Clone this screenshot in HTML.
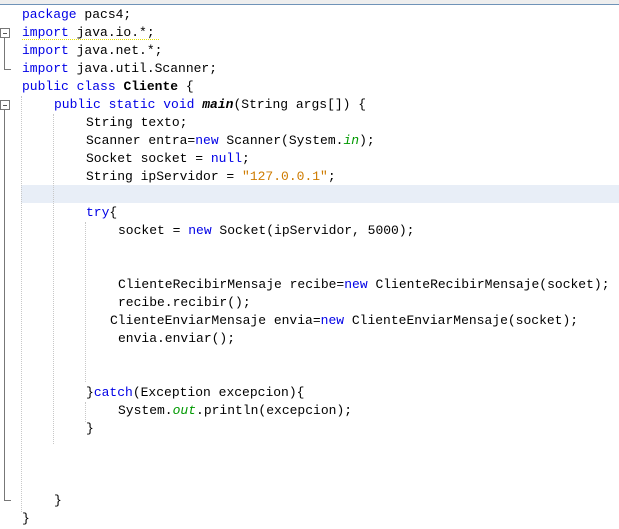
<!DOCTYPE html>
<html><head><meta charset="utf-8"><style>
html,body{margin:0;padding:0;background:#fff;width:619px;height:529px;overflow:hidden;position:relative}
.top{position:absolute;left:0;top:0;width:619px;height:4px;background:#eeeeee;border-bottom:1px solid #6f93b8}
.l{position:absolute;white-space:pre;font-family:"Liberation Mono",monospace;font-size:13px;line-height:18px;color:#000;height:18px}
.k{color:#0000e6}.s{color:#ce7b00}.g{color:#009900;font-style:italic}.b{font-weight:bold}
.hl{position:absolute;left:21px;top:185px;width:598px;height:18px;background:#e8eef7}
.v{position:absolute;width:0;border-left:1px dotted #c8c8c8}
.fold{position:absolute;border-left:1px solid #777}
.box{position:absolute;width:8px;height:8px;border:1px solid #777;background:#fff}
.box:after{content:"";position:absolute;left:2px;top:4px;width:4px;height:1px;background:#555}
</style></head><body>
<div class="top"></div>
<div class="hl"></div>
<div class="v" style="left:21px;top:96px;height:416px"></div>
<div class="v" style="left:53px;top:114px;height:330px"></div>
<div class="v" style="left:85px;top:222px;height:160px"></div>
<div class="v" style="left:85px;top:402px;height:20px"></div>
<div class="fold" style="left:4px;top:38px;height:31px;border-bottom:1px solid #777;width:6px"></div>
<div class="box" style="left:0px;top:28px"></div>
<div class="fold" style="left:4px;top:110px;height:390px;border-bottom:1px solid #777;width:6px"></div>
<div class="box" style="left:0px;top:100px"></div>
<div class="l" style="left:22px;top:6px"><span class="k">package</span> pacs4;</div>
<div class="l" style="left:22px;top:24px"><span class="k">import</span> java.io.*;</div>
<div style="position:absolute;left:22px;top:39px;width:137px;border-bottom:1px dotted #e8e000"></div>
<div class="l" style="left:22px;top:42px"><span class="k">import</span> java.net.*;</div>
<div class="l" style="left:22px;top:60px"><span class="k">import</span> java.util.Scanner;</div>
<div class="l" style="left:22px;top:78px"><span class="k">public class</span> <span class="b">Cliente</span> {</div>
<div class="l" style="left:54px;top:96px"><span class="k">public static void</span> <b><i>main</i></b>(String args[]) {</div>
<div class="l" style="left:86px;top:114px">String texto;</div>
<div class="l" style="left:86px;top:132px">Scanner entra=<span class="k">new</span> Scanner(System.<span class="g">in</span>);</div>
<div class="l" style="left:86px;top:150px">Socket socket = <span class="k">null</span>;</div>
<div class="l" style="left:86px;top:168px">String ipServidor = <span class="s">"127.0.0.1"</span>;</div>
<div class="l" style="left:86px;top:204px"><span class="k">try</span>{</div>
<div class="l" style="left:118px;top:222px">socket = <span class="k">new</span> Socket(ipServidor, 5000);</div>
<div class="l" style="left:118px;top:276px">ClienteRecibirMensaje recibe=<span class="k">new</span> ClienteRecibirMensaje(socket);</div>
<div class="l" style="left:118px;top:294px">recibe.recibir();</div>
<div class="l" style="left:110px;top:312px">ClienteEnviarMensaje envia=<span class="k">new</span> ClienteEnviarMensaje(socket);</div>
<div class="l" style="left:118px;top:330px">envia.enviar();</div>
<div class="l" style="left:86px;top:384px">}<span class="k">catch</span>(Exception excepcion){</div>
<div class="l" style="left:118px;top:402px">System.<span class="g">out</span>.println(excepcion);</div>
<div class="l" style="left:86px;top:420px">}</div>
<div class="l" style="left:54px;top:492px">}</div>
<div class="l" style="left:22px;top:510px">}</div>
</body></html>
